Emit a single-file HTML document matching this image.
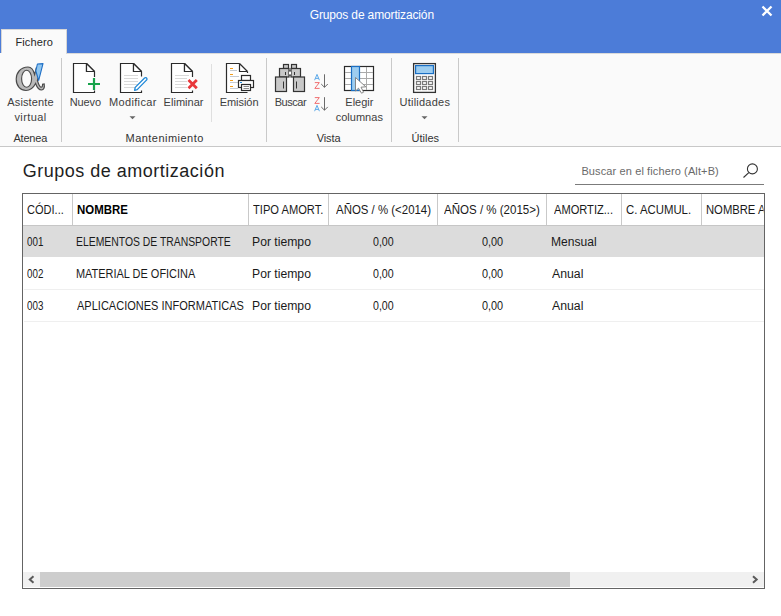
<!DOCTYPE html>
<html><head><meta charset="utf-8">
<style>
html,body{margin:0;padding:0;}
body{width:781px;height:616px;position:relative;overflow:hidden;background:#ffffff;font-family:"Liberation Sans", sans-serif;}
.t{position:absolute;white-space:nowrap;}
.a{position:absolute;}
</style></head><body>
<div class="a" style="left:0;top:0;width:781px;height:53px;background:#4c7cd8;"></div>
<div class="a" style="left:1px;top:29px;width:64px;height:24px;background:#fafafa;border:1px solid #d6d6d6;border-bottom:none;"></div>
<div class="a" style="left:0;top:53px;width:781px;height:93px;background:#fafafa;"></div>
<div class="a" style="left:66px;top:53px;width:715px;height:1px;background:#dadada;"></div>
<div class="a" style="left:0;top:146px;width:781px;height:1px;background:#c8c8c8;"></div>
<!-- separators -->
<div class="a" style="left:61px;top:58px;width:1px;height:84px;background:#c9c9c9;"></div>
<div class="a" style="left:211px;top:64px;width:1px;height:58px;background:#dfdfdf;"></div>
<div class="a" style="left:266px;top:58px;width:1px;height:84px;background:#c9c9c9;"></div>
<div class="a" style="left:391px;top:58px;width:1px;height:84px;background:#c9c9c9;"></div>
<div class="a" style="left:458px;top:58px;width:1px;height:84px;background:#c9c9c9;"></div>
<svg class="a" style="left:0;top:0" width="781" height="150" viewBox="0 0 781 150">
<!-- close X -->
<path d="M762.5,6.5 L771.5,15.5 M771.5,6.5 L762.5,15.5" stroke="#ffffff" stroke-width="2.3" fill="none"/>
<!-- alpha -->
<g transform="translate(12,60)">
<path fill-rule="evenodd" fill="#b9b9b9" stroke="#4a4a4a" stroke-width="1.15" d="M16,7 C8.5,7 4.2,13 4.2,19 C4.2,26 8.5,30.5 14,30.5 C18.5,30.5 21.5,27.5 23.6,23.5 C25,27.5 27,30 29.6,30 C31.8,30 32.8,27.5 32.2,24 L30.6,24.2 C30.6,26.2 30,27.2 29.2,27.2 C27.8,27.2 26.6,24.5 25.4,20.5 C26.8,16 27.8,12 28.5,8 L24.2,8 C23.8,10.5 23.2,12.5 22.6,14.5 C21.4,9.5 19,7 16,7 Z M14.6,10.2 C11.8,10.2 9.6,14 9.6,18.7 C9.6,23.4 11.8,27.2 14.6,27.2 C17.4,27.2 19.6,23.4 19.6,18.7 C19.6,14 17.4,10.2 14.6,10.2 Z"/>
<path fill="#8fc6f0" stroke="#1f6fc5" stroke-width="1.1" stroke-linejoin="round" d="M25.4,4 L31,3.6 L26.7,20.4 L23.8,11 Z"/>
</g>
<!-- Nuevo page -->
<path d="M73.5,63.5 H86.5 L94.5,71.5 V92.5 H73.5 Z" fill="#fff"/><path d="M86.5,63.5 L73.5,63.5 L73.5,92.5 L94.5,92.5 L94.5,90.5 M94.5,77 L94.5,71.5 L86.5,63.5 L86.5,71.5 L94.5,71.5" fill="none" stroke="#2b2b2b" stroke-width="1.2" stroke-miterlimit="1.5"/>
<path d="M86.5,63.5 L94.5,71.5 L86.5,71.5 Z" fill="#fff" stroke="#2b2b2b" stroke-width="1.2" stroke-miterlimit="1.5"/>
<path d="M88,84 L100,84 M94,78 L94,90" stroke="#17a34a" stroke-width="2.2" fill="none"/>
<!-- Modificar page -->
<g transform="translate(47,0)">
<path d="M73.5,63.5 H86.5 L94.5,71.5 V92.5 H73.5 Z" fill="#fff"/><path d="M86.5,63.5 L73.5,63.5 L73.5,92.5 L94.5,92.5 L94.5,90.5 M94.5,76.5 L94.5,71.5 L86.5,63.5 L86.5,71.5 L94.5,71.5" fill="none" stroke="#2b2b2b" stroke-width="1.2" stroke-miterlimit="1.5"/>
<path d="M86.5,63.5 L94.5,71.5 L86.5,71.5 Z" fill="#fff" stroke="#2b2b2b" stroke-width="1.2" stroke-miterlimit="1.5"/>
<path d="M77,75.5 H91 M77,78.5 H91 M77,81.5 H91 M77,84.5 H91 M77,87.5 H88" stroke="#d9d9d9" stroke-width="1" fill="none"/>
</g>
<path transform="translate(0,1.2)" d="M134.6,89.2 L135.2,86.2 L144.6,76.8 C145.4,76 146.6,76.4 146.9,77.2 C147.2,78 146.8,78.8 146.2,79.2 L137.2,88.4 Z" fill="#fff" stroke="#1e88d8" stroke-width="1.3" stroke-linejoin="round"/>
<!-- Eliminar page -->
<g transform="translate(98,0)">
<path d="M73.5,63.5 H86.5 L94.5,71.5 V92.5 H73.5 Z" fill="#fff"/><path d="M86.5,63.5 L73.5,63.5 L73.5,92.5 L94.5,92.5 L94.5,90.5 M94.5,77 L94.5,71.5 L86.5,63.5 L86.5,71.5 L94.5,71.5" fill="none" stroke="#2b2b2b" stroke-width="1.2" stroke-miterlimit="1.5"/>
<path d="M86.5,63.5 L94.5,71.5 L86.5,71.5 Z" fill="#fff" stroke="#2b2b2b" stroke-width="1.2" stroke-miterlimit="1.5"/>
<path d="M77,75.5 H91 M77,78.5 H89 M77,81.5 H89 M77,84.5 H89 M77,87.5 H89" stroke="#d9d9d9" stroke-width="1" fill="none"/>
</g>
<path d="M188.5,80 L196.8,88.2 M196.8,80 L188.5,88.2" stroke="#e8383b" stroke-width="2.8" fill="none"/>
<!-- Emision -->
<path d="M226.5,63.5 H239.5 L247.5,71.5 V92.5 H226.5 Z" fill="#fff"/><path d="M239.5,63.5 L226.5,63.5 L226.5,92.5 L247.5,92.5 M247.5,71.5 V73" fill="none" stroke="#2b2b2b" stroke-width="1.2" stroke-miterlimit="1.5"/>
<path d="M239.5,63.5 L247.5,71.5 L239.5,71.5 Z" fill="#fff" stroke="#2b2b2b" stroke-width="1.2" stroke-miterlimit="1.5"/>
<path d="M230,68.5 H233 M230,74.5 H233 M230,80.5 H233 M230,86.5 H233" stroke="#f29d1c" stroke-width="1.2"/>
<path d="M230,70.5 H237 M230,76.5 H239 M230,82.5 H238 M230,88.5 H238" stroke="#c6cbd1" stroke-width="1"/>
<rect x="241.5" y="75.5" width="9" height="5" fill="#fff" stroke="#2b2b2b" stroke-width="1.2" stroke-miterlimit="1.5"/>
<rect x="238.5" y="80.5" width="15" height="7" fill="#fff" stroke="#2b2b2b" stroke-width="1.2" stroke-miterlimit="1.5"/>
<rect x="241.5" y="84.5" width="9" height="6" fill="#fff" stroke="#2b2b2b" stroke-width="1.2" stroke-miterlimit="1.5"/>
<path d="M243.5,86.5 H249 M243.5,88.5 H249" stroke="#8a8a8a" stroke-width="1"/>
<path d="M240,82.5 H242" stroke="#1e88d8" stroke-width="1.2"/>
<!-- binoculars -->
<g fill="#c8c8c8" stroke="#333" stroke-width="1.2">
<rect x="283.5" y="64.5" width="5" height="4"/>
<rect x="291.5" y="64.5" width="5" height="4"/>
<rect x="279.5" y="68.5" width="9.5" height="8.5"/>
<rect x="291" y="68.5" width="9.5" height="8.5"/>
<rect x="275.5" y="77" width="11" height="14.5"/>
<rect x="293.5" y="77" width="11" height="14.5"/>
</g>
<rect x="289" y="71" width="2" height="4" fill="#fff"/><path d="M289,71 H291 M289,75 H291" stroke="#333" stroke-width="1"/>
<path d="M283.5,81.5 V88.5 M296.5,81.5 V88.5 M285.5,72 V75 M294.5,72 V75" stroke="#333" stroke-width="1"/>
<!-- sort icons -->
<g fill="none" stroke-width="0.9">
<path d="M314.6,80.2 L317,74.4 L319.4,80.2 M315.4,78.4 H318.6" stroke="#4da0e6"/>
<path d="M314.8,82.6 H319.3 L314.8,88.4 H319.6" stroke="#ef5f61"/>
<path d="M324.5,74.3 V87.3 M321.2,84 L324.5,87.3 L327.8,84" stroke="#5a5a5a"/>
<path d="M314.8,97.6 H319.3 L314.8,103.4 H319.6" stroke="#ef5f61"/>
<path d="M314.6,111.2 L317,105.4 L319.4,111.2 M315.4,109.4 H318.6" stroke="#4da0e6"/>
<path d="M324.5,97.2 V110.2 M321.2,106.9 L324.5,110.2 L327.8,106.9" stroke="#5a5a5a"/>
</g>
<!-- elegir columnas -->
<rect x="344.5" y="66.5" width="29" height="24" fill="#fff" stroke="#2b2b2b" stroke-width="1.2" stroke-miterlimit="1.5"/>
<path d="M345,72.5 H373 M345,78.5 H373 M345,84.5 H373 M366.5,67 V90" stroke="#aaaaaa" stroke-width="1"/>
<rect x="351.5" y="66.5" width="8" height="24" fill="#9dcdf0" stroke="#1a6fc4" stroke-width="1.2"/>
<path d="M355.5,77.5 L355.5,91 L358.5,88.2 L361.5,93.2 L363.6,92.2 L361,87.2 L365.8,86.8 Z" fill="#fff" stroke="#7a7a7a" stroke-width="0.9" stroke-linejoin="round"/>
<!-- calculator -->
<rect x="413.6" y="63.6" width="21.8" height="28.8" fill="#fff" stroke="#333" stroke-width="1.3"/>
<rect x="415.6" y="65.6" width="17.8" height="8" fill="#9dcdf0" stroke="#1a6fc4" stroke-width="1.2"/>
<g fill="none" stroke="#7a7a7a" stroke-width="1.2">
<rect x="416.5" y="76.5" width="4" height="3"/><rect x="422.5" y="76.5" width="4" height="3"/><rect x="428.5" y="76.5" width="4" height="3"/>
<rect x="416.5" y="81.5" width="4" height="3"/><rect x="422.5" y="81.5" width="4" height="3"/><rect x="428.5" y="81.5" width="4" height="3"/>
<rect x="416.5" y="86.5" width="4" height="3"/><rect x="422.5" y="86.5" width="4" height="3"/><rect x="428.5" y="86.5" width="4" height="3"/>
</g>
<!-- dropdown arrows -->
<path d="M129.5,116.3 H135.5 L132.5,119.3 Z" fill="#666"/>
<path d="M421.5,116.3 H427.5 L424.5,119.3 Z" fill="#666"/>
</svg>
<!-- search icon -->
<svg class="a" style="left:738px;top:160px" width="22" height="22" viewBox="0 0 22 22">
<circle cx="14.4" cy="8.9" r="5" fill="none" stroke="#333" stroke-width="1.1"/>
<path d="M10.8,12.6 L5.5,17.5" stroke="#333" stroke-width="1.1"/>
</svg>
<!-- table -->
<div class="a" style="left:22px;top:193px;width:741px;height:394px;border:1px solid #646464;"></div>
<div class="a" style="left:23px;top:226px;width:741px;height:31px;background:#dcdcdc;"></div>
<div class="a" style="left:23px;top:225px;width:741px;height:1px;background:#c6c6c6;"></div>
<div class="a" style="left:72px;top:194px;width:1px;height:31px;background:#c9c9c9;"></div>
<div class="a" style="left:248px;top:194px;width:1px;height:31px;background:#c9c9c9;"></div>
<div class="a" style="left:328px;top:194px;width:1px;height:31px;background:#c9c9c9;"></div>
<div class="a" style="left:437px;top:194px;width:1px;height:31px;background:#c9c9c9;"></div>
<div class="a" style="left:546px;top:194px;width:1px;height:31px;background:#c9c9c9;"></div>
<div class="a" style="left:621px;top:194px;width:1px;height:31px;background:#c9c9c9;"></div>
<div class="a" style="left:701px;top:194px;width:1px;height:31px;background:#c9c9c9;"></div>
<div class="a" style="left:24px;top:289px;width:740px;height:1px;background:#efefef;"></div>
<div class="a" style="left:24px;top:321px;width:740px;height:1px;background:#efefef;"></div>
<div class="a" style="left:575px;top:184px;width:189px;height:1px;background:#7b7b7b;"></div>
<!-- scrollbar -->
<div class="a" style="left:23px;top:572px;width:741px;height:15px;background:#f0f0f0;"></div>
<div class="a" style="left:40px;top:572px;width:530px;height:15px;background:#cdcdcd;"></div>
<svg class="a" style="left:23px;top:572px" width="740" height="15" viewBox="0 0 740 15">
<path d="M10.5,4.2 L6.8,7.5 L10.5,10.8" fill="none" stroke="#5a5a5a" stroke-width="2"/>
<path d="M730,4.2 L733.7,7.5 L730,10.8" fill="none" stroke="#5a5a5a" stroke-width="2"/>
</svg>

<div class="t" style="left:309.70px;top:9.44px;font-size:12px;line-height:12px;color:#ffffff;letter-spacing:-0.144px;">Grupos de amortización</div>
<div class="t" style="left:15.40px;top:37.29px;font-size:11px;line-height:11px;color:#262626;letter-spacing:0.123px;">Fichero</div>
<div class="t" style="left:7.30px;top:97.29px;font-size:11px;line-height:11px;color:#404040;letter-spacing:0.121px;">Asistente</div>
<div class="t" style="left:14.40px;top:112.19px;font-size:11px;line-height:11px;color:#404040;letter-spacing:0.417px;">virtual</div>
<div class="t" style="left:69.70px;top:97.09px;font-size:11px;line-height:11px;color:#404040;letter-spacing:-0.120px;">Nuevo</div>
<div class="t" style="left:109.00px;top:97.09px;font-size:11px;line-height:11px;color:#404040;letter-spacing:0.343px;">Modificar</div>
<div class="t" style="left:163.60px;top:97.09px;font-size:11px;line-height:11px;color:#404040;letter-spacing:0.019px;">Eliminar</div>
<div class="t" style="left:219.70px;top:97.09px;font-size:11px;line-height:11px;color:#404040;letter-spacing:-0.051px;">Emisión</div>
<div class="t" style="left:274.70px;top:97.09px;font-size:11px;line-height:11px;color:#404040;letter-spacing:-0.454px;">Buscar</div>
<div class="t" style="left:345.30px;top:97.29px;font-size:11px;line-height:11px;color:#404040;letter-spacing:0.008px;">Elegir</div>
<div class="t" style="left:335.70px;top:111.79px;font-size:11px;line-height:11px;color:#404040;letter-spacing:0.017px;">columnas</div>
<div class="t" style="left:399.60px;top:97.29px;font-size:11px;line-height:11px;color:#404040;letter-spacing:0.222px;">Utilidades</div>
<div class="t" style="left:13.40px;top:132.89px;font-size:11px;line-height:11px;color:#333333;letter-spacing:-0.189px;">Atenea</div>
<div class="t" style="left:125.50px;top:133.19px;font-size:11px;line-height:11px;color:#333333;letter-spacing:0.472px;">Mantenimiento</div>
<div class="t" style="left:316.80px;top:133.09px;font-size:11px;line-height:11px;color:#333333;letter-spacing:-0.135px;">Vista</div>
<div class="t" style="left:411.60px;top:132.79px;font-size:11px;line-height:11px;color:#333333;letter-spacing:-0.001px;">Útiles</div>
<div class="t" style="left:22.70px;top:162.36px;font-size:18px;line-height:18px;color:#1e1e1e;letter-spacing:0.506px;">Grupos de amortización</div>
<div class="t" style="left:581.40px;top:165.79px;font-size:11px;line-height:11px;color:#6a6a6a;letter-spacing:0.117px;">Buscar en el fichero (Alt+B)</div>
<div class="t" style="left:27.40px;top:204.02px;font-size:12.5px;line-height:12.5px;color:#1a1a1a;transform:scaleX(0.8836);transform-origin:0 0;">CÓDI...</div>
<div class="t" style="left:77.20px;top:204.02px;font-size:12.5px;line-height:12.5px;color:#000000;transform:scaleX(0.9146);transform-origin:0 0;font-weight:700;">NOMBRE</div>
<div class="t" style="left:253.40px;top:204.02px;font-size:12.5px;line-height:12.5px;color:#1a1a1a;transform:scaleX(0.8905);transform-origin:0 0;">TIPO AMORT.</div>
<div class="t" style="left:335.50px;top:204.02px;font-size:12.5px;line-height:12.5px;color:#1a1a1a;transform:scaleX(0.9151);transform-origin:0 0;">AÑOS / % (&lt;2014)</div>
<div class="t" style="left:444.00px;top:204.02px;font-size:12.5px;line-height:12.5px;color:#1a1a1a;transform:scaleX(0.9228);transform-origin:0 0;">AÑOS / % (2015&gt;)</div>
<div class="t" style="left:554.20px;top:204.02px;font-size:12.5px;line-height:12.5px;color:#1a1a1a;transform:scaleX(0.8884);transform-origin:0 0;">AMORTIZ...</div>
<div class="t" style="left:626.20px;top:204.02px;font-size:12.5px;line-height:12.5px;color:#1a1a1a;transform:scaleX(0.9100);transform-origin:0 0;">C. ACUMUL.</div>
<div class="t" style="left:706.00px;top:204.02px;font-size:12.5px;line-height:12.5px;color:#1a1a1a;transform:scaleX(0.9000);transform-origin:0 0;width:64.4px;overflow:hidden;">NOMBRE A</div>
<div class="t" style="left:27.40px;top:235.92px;font-size:12.5px;line-height:12.5px;color:#1a1a1a;transform:scaleX(0.7845);transform-origin:0 0;">001</div>
<div class="t" style="left:76.07px;top:235.92px;font-size:12.5px;line-height:12.5px;color:#1a1a1a;transform:scaleX(0.8311);transform-origin:0 0;">ELEMENTOS DE TRANSPORTE</div>
<div class="t" style="left:252.43px;top:235.92px;font-size:12.5px;line-height:12.5px;color:#1a1a1a;transform:scaleX(0.9749);transform-origin:0 0;">Por tiempo</div>
<div class="t" style="left:373.10px;top:235.92px;font-size:12.5px;line-height:12.5px;color:#1a1a1a;transform:scaleX(0.8492);transform-origin:0 0;">0,00</div>
<div class="t" style="left:481.90px;top:235.92px;font-size:12.5px;line-height:12.5px;color:#1a1a1a;transform:scaleX(0.8697);transform-origin:0 0;">0,00</div>
<div class="t" style="left:550.53px;top:235.92px;font-size:12.5px;line-height:12.5px;color:#1a1a1a;transform:scaleX(0.9655);transform-origin:0 0;">Mensual</div>
<div class="t" style="left:27.40px;top:267.82px;font-size:12.5px;line-height:12.5px;color:#1a1a1a;transform:scaleX(0.7845);transform-origin:0 0;">002</div>
<div class="t" style="left:76.02px;top:267.82px;font-size:12.5px;line-height:12.5px;color:#1a1a1a;transform:scaleX(0.8763);transform-origin:0 0;">MATERIAL DE OFICINA</div>
<div class="t" style="left:252.43px;top:267.82px;font-size:12.5px;line-height:12.5px;color:#1a1a1a;transform:scaleX(0.9749);transform-origin:0 0;">Por tiempo</div>
<div class="t" style="left:373.10px;top:267.82px;font-size:12.5px;line-height:12.5px;color:#1a1a1a;transform:scaleX(0.8492);transform-origin:0 0;">0,00</div>
<div class="t" style="left:481.90px;top:267.82px;font-size:12.5px;line-height:12.5px;color:#1a1a1a;transform:scaleX(0.8697);transform-origin:0 0;">0,00</div>
<div class="t" style="left:551.50px;top:267.82px;font-size:12.5px;line-height:12.5px;color:#1a1a1a;transform:scaleX(0.9810);transform-origin:0 0;">Anual</div>
<div class="t" style="left:27.40px;top:299.82px;font-size:12.5px;line-height:12.5px;color:#1a1a1a;transform:scaleX(0.7845);transform-origin:0 0;">003</div>
<div class="t" style="left:76.90px;top:299.82px;font-size:12.5px;line-height:12.5px;color:#1a1a1a;transform:scaleX(0.8813);transform-origin:0 0;">APLICACIONES INFORMATICAS</div>
<div class="t" style="left:252.43px;top:299.82px;font-size:12.5px;line-height:12.5px;color:#1a1a1a;transform:scaleX(0.9749);transform-origin:0 0;">Por tiempo</div>
<div class="t" style="left:373.10px;top:299.82px;font-size:12.5px;line-height:12.5px;color:#1a1a1a;transform:scaleX(0.8492);transform-origin:0 0;">0,00</div>
<div class="t" style="left:481.90px;top:299.82px;font-size:12.5px;line-height:12.5px;color:#1a1a1a;transform:scaleX(0.8697);transform-origin:0 0;">0,00</div>
<div class="t" style="left:551.50px;top:299.82px;font-size:12.5px;line-height:12.5px;color:#1a1a1a;transform:scaleX(0.9810);transform-origin:0 0;">Anual</div>
</body></html>
